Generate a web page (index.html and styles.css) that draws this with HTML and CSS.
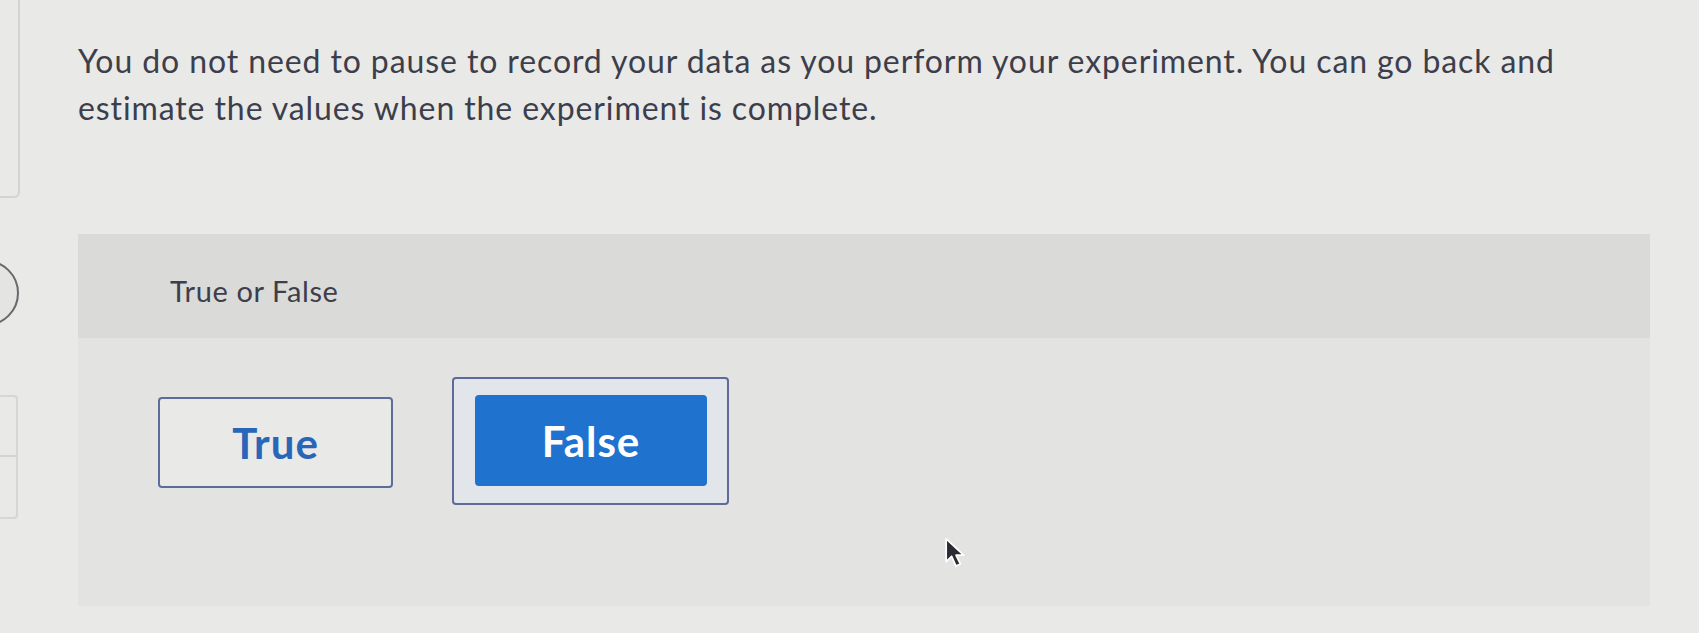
FILE: index.html
```html
<!DOCTYPE html>
<html>

<head>
    <title>True or False</title>
    <link rel="stylesheet" href="styles.css">
</head>

<body>

<div class="page">

    <div class="rail">
        <div class="rail-card"></div>
        <div class="rail-dot"></div>
        <div class="rail-box">
            <div class="rail-box-top"></div>
        </div>
    </div> <!-- rail -->

    <div class="main">
        <p class="prompt">You do not need to pause to record your data as you perform your experiment. You can go back and estimate the values when the experiment is complete.</p>

        <div class="question">
            <div class="question-head">True or False</div>
            <div class="question-body">
                <button class="choice" type="button">True</button>
                <div class="focus-ring">
                    <button class="choice selected" type="button">False</button>
                </div>
            </div>
        </div> <!-- question -->
    </div> <!-- main -->

</div> <!-- page -->

<svg class="cursor" width="24" height="34" viewBox="0 0 22 30">
    <path d="M2 2 L2 23 L7 18 L11 27 L15 25 L11 17 L18 17 Z" fill="#2b2a33" stroke="#ffffff" stroke-width="1.6" stroke-linejoin="round"/>
</svg>

</body>

</html>
```

FILE: styles.css
```css
body {
    background-color: #e9e9e7;
    margin: 0;
    overflow: hidden;
    font-family: Lato, "Open Sans", sans-serif;
    color: #3d3e4b;
}

.page {
    display: flex;
    height: 633px;
}

/* bits of the side column, mostly off screen */
.rail {
    width: 20px;
    flex: none;
    overflow: hidden;
    display: flex;
    flex-direction: column;
    align-items: flex-end;
}

.rail-card {
    width: 60px;
    height: 210px;
    margin-top: -12px;
    border: 2px solid #d3d3d1;
    border-radius: 6px;
    box-sizing: border-box;
}

.rail-dot {
    width: 66px;
    height: 66px;
    margin-top: 62px;
    margin-right: 1px;
    border: 2px solid #66686e;
    border-radius: 50%;
    box-sizing: border-box;
    background-color: #e4e4e2;
}

.rail-box {
    width: 60px;
    height: 124px;
    margin-top: 69px;
    margin-right: 2px;
    border: 2px solid #d6d6d4;
    border-radius: 4px;
    box-sizing: border-box;
}

.rail-box-top {
    height: 58px;
    border-bottom: 2px solid #d2d2d0;
}

.main {
    padding-left: 58px;
    width: 1572px;
}

.prompt {
    margin: 37px 0 0 0;
    font-size: 32px;
    line-height: 47px;
    letter-spacing: 0.9px;
}

.question {
    margin-top: 103px;
    background-color: #e3e3e2;
}

.question-head {
    height: 104px;
    box-sizing: border-box;
    padding: 40px 0 0 92px;
    background-color: #dadad9;
    font-size: 29px;
    line-height: 1.2;
    letter-spacing: 0.6px;
}

.question-body {
    height: 268px;
    box-sizing: border-box;
    padding: 39px 0 0 80px;
    display: flex;
    align-items: flex-start;
    gap: 59px;
}

.choice {
    width: 235px;
    height: 91px;
    margin-top: 20px;
    border: 2px solid #5d6c9c;
    border-radius: 4px;
    background-color: #e9e9e8;
    color: #2a66b8;
    font-family: Lato, "Open Sans", sans-serif;
    font-weight: bold;
    font-size: 42px;
    letter-spacing: 1px;
    padding: 0;
}

.focus-ring {
    display: flex;
    padding: 16px 20px 17px 21px;
    border: 2px solid #5d6a9a;
    border-radius: 4px;
    background-color: #e2e6ea;
}

.choice.selected {
    width: 232px;
    margin-top: 0;
    border: none;
    background-color: #1f73cf;
    color: #ffffff;
}

.cursor {
    position: absolute;
    left: 944px;
    top: 536px;
}
```
